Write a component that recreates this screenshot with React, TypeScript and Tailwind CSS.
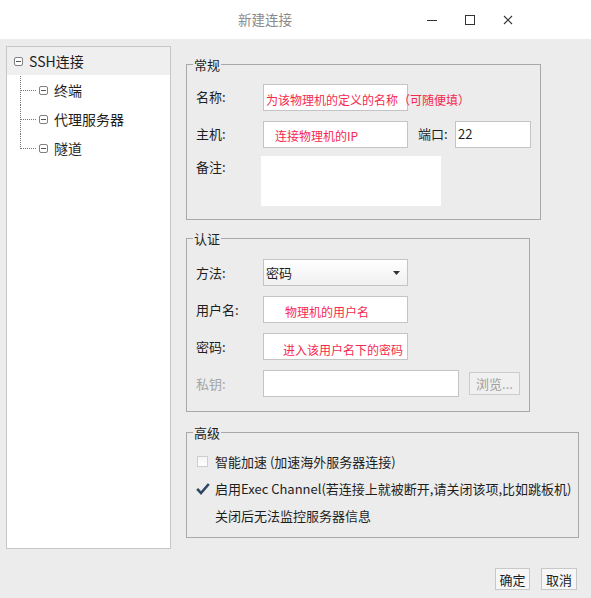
import React from 'react';

const MinusBox: React.FC = () => (
  <svg width="9" height="9" viewBox="0 0 9 9" className="shrink-0">
    <rect x="0.5" y="0.5" width="8" height="8" rx="1.5" fill="#fff" stroke="#808080" />
    <line x1="2" y1="4.5" x2="7" y2="4.5" stroke="#555" />
  </svg>
);

const TreeChild: React.FC<{ label: string; last?: boolean }> = ({ label, last }) => (
  <div className="h-[29px] flex items-center">
    <svg width="19" height="29" className="ml-[13px] shrink-0">
      <line x1="0.5" y1="0" x2="0.5" y2={last ? 15 : 29} stroke="#777" strokeDasharray="1 1" />
      <line x1="1" y1="14.5" x2="16" y2="14.5" stroke="#777" strokeDasharray="1 1" />
    </svg>
    <MinusBox />
    <span className="ml-[6px]">{label}</span>
  </div>
);

const Group: React.FC<{ title: string; className: string; children: React.ReactNode }> = ({ title, className, children }) => (
  <div className={`relative border border-[#a8a8a8] ${className}`}>
    <span className="absolute -top-[9px] left-[6px] bg-[#ececec] px-px leading-[18px]">{title}</span>
    {children}
  </div>
);

// plain box drawn like a Qt line edit; hint text in red may run past its edge
const Field: React.FC<{ className: string; hint?: boolean; children?: React.ReactNode }> = ({ className, hint, children }) => (
  <div
    className={`h-[27px] bg-white border border-[#c4c4c4] flex items-center whitespace-nowrap ${
      hint ? 'text-[12px] text-[#f5294f]' : 'text-[13px] text-[#1e1e1e]'
    } ${className}`}
  >
    {children}
  </div>
);

export default function App() {
  return (
    <div className="w-[591px] h-[598px] bg-[#ececec] flex flex-col text-[13px] text-[#1e1e1e] font-['Noto_Sans_CJK_SC','Noto_Sans',sans-serif] overflow-hidden">
      {/* title bar */}
      <div className="h-[39px] bg-white flex items-center shrink-0">
        <span className="ml-[238px] text-[13.5px] text-[#8a8a8a]">新建连接</span>
        <div className="ml-auto mr-[75px] flex items-center gap-[22px]">
          <svg width="16" height="16" viewBox="0 0 16 16">
            <line x1="3" y1="8.5" x2="13" y2="8.5" stroke="#333" />
          </svg>
          <svg width="16" height="16" viewBox="0 0 16 16">
            <rect x="3.5" y="3.5" width="9" height="9" fill="none" stroke="#333" />
          </svg>
          <svg width="16" height="16" viewBox="0 0 16 16">
            <path d="M4 4 L12 12 M12 4 L4 12" stroke="#333" strokeWidth="1.1" />
          </svg>
        </div>
      </div>

      <div className="flex items-start pt-[7px] pl-[6px]">
        {/* tree */}
        <div className="w-[165px] h-[503px] bg-white border border-[#c6c6c6] flex flex-col text-[14px]">
          <div className="h-[28px] bg-[#efefef] flex items-center pl-[7px]">
            <MinusBox />
            <span className="ml-[6px]">SSH连接</span>
          </div>
          <div className="pt-px">
            <TreeChild label="终端" />
            <TreeChild label="代理服务器" />
            <TreeChild label="隧道" last />
          </div>
        </div>

        {/* settings */}
        <div className="ml-[15px] mt-[18px] flex flex-col">
          <Group title="常规" className="w-[355px] h-[156px] pt-[19px] pl-[9px]">
            <div className="flex items-center h-[26px]">
              <span className="w-[67px]">名称:</span>
              <Field hint className="w-[145px] h-[26px] items-end pb-[1px] pl-[2px]">为该物理机的定义的名称（可随便填）</Field>
            </div>
            <div className="flex items-center h-[26px] mt-[11px]">
              <span className="w-[67px]">主机:</span>
              <Field hint className="w-[145px] h-[26px] pt-[4px] pl-[11px]">连接物理机的IP</Field>
              <span className="ml-[10px] w-[37px]">端口:</span>
              <Field className="w-[76px] h-[26px] pl-[2px]">22</Field>
            </div>
            <div className="flex items-start mt-[9px]">
              <span className="w-[65px] mt-[1px]">备注:</span>
              <div className="w-[180px] h-[50px] bg-white" />
            </div>
          </Group>

          <Group title="认证" className="w-[344px] h-[174px] mt-[18px] pt-[20px] pl-[9px]">
            <div className="flex items-center h-[27px]">
              <span className="w-[67px]">方法:</span>
              <div className="w-[145px] h-[27px] border border-[#c4c4c4] bg-gradient-to-b from-white to-[#f0f0f0] flex items-center pl-[2px] pr-[3px]">
                <span>密码</span>
                <svg width="7" height="4" viewBox="0 0 7 4" className="ml-auto mr-[4px]">
                  <path d="M0 0 H7 L3.5 4 Z" fill="#333" />
                </svg>
              </div>
            </div>
            <div className="flex items-center h-[27px] mt-[10px]">
              <span className="w-[67px]">用户名:</span>
              <Field hint className="w-[145px] pt-[5px] pl-[21px]">物理机的用户名</Field>
            </div>
            <div className="flex items-center h-[27px] mt-[10px]">
              <span className="w-[67px]">密码:</span>
              <Field hint className="w-[145px] pt-[6px] pl-[19px]">进入该用户名下的密码</Field>
            </div>
            <div className="flex items-center h-[27px] mt-[10px]">
              <span className="w-[67px] text-[#a6a6a6]">私钥:</span>
              <Field className="w-[196px]" />
              <button className="ml-[10px] w-[51px] h-[23px] border border-[#cccccc] bg-[#f0f0f0] text-[#a0a0a0] text-[13px] leading-none">浏览...</button>
            </div>
          </Group>

          <Group title="高级" className="w-[393px] h-[106px] mt-[20px] pt-[15px] pl-[10px]">
            <div className="flex items-center h-[27px]">
              <span className="w-[11px] h-[11px] border border-[#cdcdcd] bg-gradient-to-b from-[#f4f4f4] to-white shrink-0" />
              <span className="ml-[7px]">智能加速 (加速海外服务器连接)</span>
            </div>
            <div className="flex items-center h-[27px]">
              <svg width="14" height="12" viewBox="0 0 14 12" className="shrink-0 -ml-px">
                <path d="M1.2 5.8 L5 10 L12.8 1" fill="none" stroke="#2f4563" strokeWidth="2.6" />
              </svg>
              <span className="ml-[5px] whitespace-nowrap">启用Exec Channel(若连接上就被断开,请关闭该项,比如跳板机)</span>
            </div>
            <div className="flex items-center h-[27px] pl-[18px]">关闭后无法监控服务器信息</div>
          </Group>
        </div>
      </div>

      {/* buttons */}
      <div className="flex justify-end gap-[11px] mt-[19px] pr-[14px]">
        <button className="w-[35px] h-[22px] border border-[#c8c8c8] bg-[#f6f6f6] text-[13px] leading-none">确定</button>
        <button className="w-[36px] h-[22px] border border-[#c8c8c8] bg-[#f6f6f6] text-[13px] leading-none">取消</button>
      </div>
    </div>
  );
}
